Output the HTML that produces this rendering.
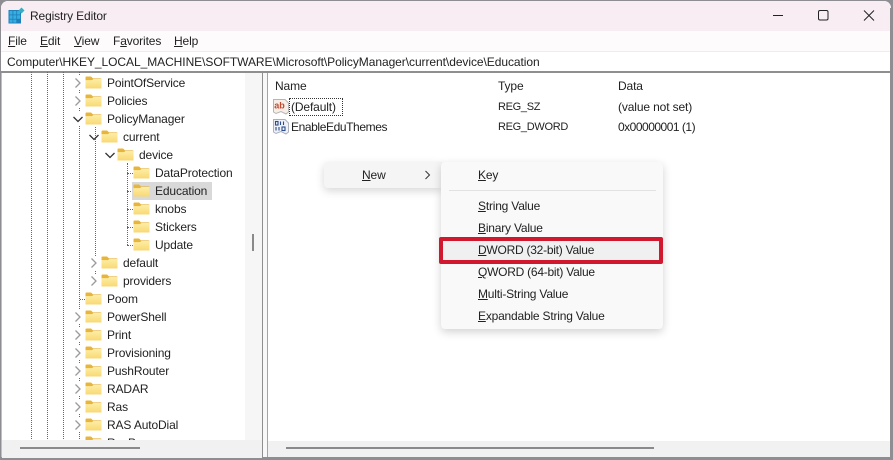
<!DOCTYPE html>
<html><head><meta charset="utf-8">
<style>
html,body{margin:0;padding:0;width:893px;height:460px;overflow:hidden;background:#8d8d92}
*{box-sizing:border-box}
body{font-family:"Liberation Sans",sans-serif;font-size:12px;color:#222;position:relative}
.a{position:absolute}
.t{position:absolute;white-space:nowrap;line-height:16px;height:16px;color:#222;letter-spacing:-.13px}
.t u{text-underline-offset:1px}
.c{position:absolute;width:8px;height:12px}
.f{position:absolute;width:17px;height:13px}
.dv{position:absolute;width:0;border-left:1px dotted #666}
.dh{position:absolute;height:0;border-top:1px dotted #666}
.n{font-size:11px;letter-spacing:-.3px}
</style></head><body>
<svg width="0" height="0" style="position:absolute">
<defs>
<linearGradient id="g" x1="0" y1="0" x2="0" y2="1"><stop offset="0" stop-color="#fdeea6"/><stop offset="1" stop-color="#f9d873"/></linearGradient>
<symbol id="fo" viewBox="0 0 17 14" preserveAspectRatio="none"><path d="M0.500 1.500Q0.500 0.500 1.500 0.500H6L8 2.500H15.500Q16.500 2.500 16.500 3.500V12.500Q16.500 13.500 15.500 13.500H1.500Q0.500 13.500 0.500 12.500Z" fill="#e8b53c"/><path d="M0.500 4.500L7 4.500L8.500 3.200H15.500Q16.500 3.200 16.500 4V12.500Q16.500 13.500 15.500 13.500H1.500Q0.500 13.500 0.500 12.500Z" fill="url(#g)"/></symbol>
<symbol id="cr" viewBox="0 0 8 12"><path d="M1.500 1.500L6 6L1.500 10.500" fill="none" stroke="#9a9a9a" stroke-width="1.300"/></symbol>
<symbol id="cd" viewBox="0 0 12 8"><path d="M1.500 2L6 6.500L10.500 2" fill="none" stroke="#333" stroke-width="1.300"/></symbol>
</defs></svg>

<!-- window -->
<div class="a" style="left:1px;top:1px;width:890px;height:458px;background:#fff;border-radius:7px 7px 0 0;overflow:hidden">
  <div class="a" style="left:0;top:0;width:890px;height:30px;background:#f7edf2"></div>
  <div class="a" style="left:0;top:30px;width:890px;height:21px;background:#fdfbfc"></div>
  <div class="a" style="left:0;top:50px;width:890px;height:1px;background:#eeeeee"></div>
  <div class="a" style="left:0;top:51px;width:890px;height:19px;background:#fff"></div>
  <div class="a" style="left:0;top:70px;width:890px;height:2px;background:#8f8f8f"></div>
  <div class="a" style="left:244px;top:72px;width:17px;height:367px;background:#f6f6f6"></div>
  <div class="a" style="left:261px;top:72px;width:1px;height:386px;background:#8f8f8f"></div>
  <div class="a" style="left:262px;top:72px;width:4px;height:386px;background:#f8f8f8"></div>
  <div class="a" style="left:266px;top:72px;width:1px;height:386px;background:#a5a5a5"></div>
  <div class="a" style="left:0;top:72px;width:1px;height:386px;background:#c0c0c0"></div>
  <div class="a" style="left:267px;top:440px;width:623px;height:18px;background:#f1f1f1"></div>
  <div class="a" style="left:889px;top:72px;width:1px;height:386px;background:#e0e0e0"></div>
</div>
<div class="a" style="left:0;top:457px;width:893px;height:3px;background:#8d8d92"></div>
<div class="a" style="left:890px;top:8px;width:3px;height:452px;background:#8d8d92"></div>
<div class="a" style="left:0;top:8px;width:1px;height:452px;background:#8d8d92"></div>

<!-- app icon -->
<svg class="a" style="left:8px;top:7px" width="17" height="17" viewBox="0 0 17 17">
<rect x="0.500" y="3" width="12.500" height="13.500" fill="#1f7fb8"/>
<g fill="#35aee2"><rect x="1.500" y="4" width="3" height="3.500"/><rect x="5.300" y="4" width="3" height="3.500"/><rect x="9.100" y="4" width="3" height="3.500"/><rect x="1.500" y="8.300" width="3" height="3.500"/><rect x="5.300" y="8.300" width="3" height="3.500"/><rect x="9.100" y="8.300" width="3" height="3.500"/><rect x="1.500" y="12.600" width="3" height="3"/><rect x="5.300" y="12.600" width="3" height="3"/></g>
<path d="M13.500 0.500L16.500 3.500L13.500 6.500L10.500 3.500Z" fill="#30b0c8"/></svg>
<span class="t" style="left:30px;top:8px">Registry Editor</span>

<!-- window buttons -->
<svg class="a" style="left:770px;top:8px" width="110" height="16" viewBox="0 0 110 16" fill="none" stroke="#222" stroke-width="1">
<path d="M3 7.500H13"/><rect x="48.500" y="2.500" width="9.500" height="9.500" rx="1.500"/><path d="M94 2.500L104 12.500M104 2.500L94 12.500"/></svg>

<!-- menu -->
<span class="t" style="left:8px;top:33px"><u>F</u>ile</span>
<span class="t" style="left:40px;top:33px"><u>E</u>dit</span>
<span class="t" style="left:74px;top:33px"><u>V</u>iew</span>
<span class="t" style="left:113px;top:33px">F<u>a</u>vorites</span>
<span class="t" style="left:174px;top:33px"><u>H</u>elp</span>
<span class="t" style="left:7px;top:54px;letter-spacing:-.06px">Computer\HKEY_LOCAL_MACHINE\SOFTWARE\Microsoft\PolicyManager\current\device\Education</span>

<!-- tree lines -->
<div class="dv" style="left:31px;top:72px;height:367px"></div>
<div class="dv" style="left:47px;top:72px;height:367px"></div>
<div class="dv" style="left:63px;top:72px;height:367px"></div>
<div class="dv" style="left:79px;top:72px;height:367px"></div>
<div class="dv" style="left:95px;top:127px;height:155px"></div>
<div class="dv" style="left:127px;top:163px;height:82px"></div>
<div class="dh" style="left:127px;top:173px;width:6px"></div>
<div class="dh" style="left:127px;top:191px;width:6px"></div>
<div class="dh" style="left:127px;top:209px;width:6px"></div>
<div class="dh" style="left:127px;top:227px;width:6px"></div>
<div class="dh" style="left:127px;top:245px;width:6px"></div>
<div class="dh" style="left:80px;top:299px;width:5px"></div>

<!-- tree rows: cover lines behind chevrons -->
<div class="a" style="left:73px;top:76px;width:11px;height:14px;background:#fff"></div>
<div class="a" style="left:73px;top:94px;width:11px;height:14px;background:#fff"></div>
<div class="a" style="left:73px;top:112px;width:11px;height:14px;background:#fff"></div>
<div class="a" style="left:73px;top:310px;width:11px;height:14px;background:#fff"></div>
<div class="a" style="left:73px;top:328px;width:11px;height:14px;background:#fff"></div>
<div class="a" style="left:73px;top:346px;width:11px;height:14px;background:#fff"></div>
<div class="a" style="left:73px;top:364px;width:11px;height:14px;background:#fff"></div>
<div class="a" style="left:73px;top:382px;width:11px;height:14px;background:#fff"></div>
<div class="a" style="left:73px;top:400px;width:11px;height:14px;background:#fff"></div>
<div class="a" style="left:73px;top:418px;width:11px;height:14px;background:#fff"></div>
<div class="a" style="left:89px;top:256px;width:11px;height:14px;background:#fff"></div>
<div class="a" style="left:89px;top:274px;width:11px;height:14px;background:#fff"></div>

<!-- selection -->
<div class="a" style="left:132px;top:182px;width:80px;height:18px;background:#d9d9d9"></div>

<!-- chevrons -->
<svg class="c" style="left:74px;top:77px"><use href="#cr"/></svg>
<svg class="c" style="left:74px;top:95px"><use href="#cr"/></svg>
<svg class="a" style="left:72px;top:115px" width="12" height="8"><use href="#cd"/></svg>
<svg class="a" style="left:88px;top:133px" width="12" height="8"><use href="#cd"/></svg>
<svg class="a" style="left:104px;top:151px" width="12" height="8"><use href="#cd"/></svg>
<svg class="c" style="left:90px;top:257px"><use href="#cr"/></svg>
<svg class="c" style="left:90px;top:275px"><use href="#cr"/></svg>
<svg class="c" style="left:74px;top:311px"><use href="#cr"/></svg>
<svg class="c" style="left:74px;top:329px"><use href="#cr"/></svg>
<svg class="c" style="left:74px;top:347px"><use href="#cr"/></svg>
<svg class="c" style="left:74px;top:365px"><use href="#cr"/></svg>
<svg class="c" style="left:74px;top:383px"><use href="#cr"/></svg>
<svg class="c" style="left:74px;top:401px"><use href="#cr"/></svg>
<svg class="c" style="left:74px;top:419px"><use href="#cr"/></svg>

<!-- folders -->
<svg class="f" style="left:85px;top:76px"><use href="#fo"/></svg>
<svg class="f" style="left:85px;top:94px"><use href="#fo"/></svg>
<svg class="f" style="left:85px;top:112px"><use href="#fo"/></svg>
<svg class="f" style="left:101px;top:130px"><use href="#fo"/></svg>
<svg class="f" style="left:117px;top:148px"><use href="#fo"/></svg>
<svg class="f" style="left:133px;top:166px"><use href="#fo"/></svg>
<svg class="f" style="left:133px;top:184px"><use href="#fo"/></svg>
<svg class="f" style="left:133px;top:202px"><use href="#fo"/></svg>
<svg class="f" style="left:133px;top:220px"><use href="#fo"/></svg>
<svg class="f" style="left:133px;top:238px"><use href="#fo"/></svg>
<svg class="f" style="left:101px;top:256px"><use href="#fo"/></svg>
<svg class="f" style="left:101px;top:274px"><use href="#fo"/></svg>
<svg class="f" style="left:85px;top:292px"><use href="#fo"/></svg>
<svg class="f" style="left:85px;top:310px"><use href="#fo"/></svg>
<svg class="f" style="left:85px;top:328px"><use href="#fo"/></svg>
<svg class="f" style="left:85px;top:346px"><use href="#fo"/></svg>
<svg class="f" style="left:85px;top:364px"><use href="#fo"/></svg>
<svg class="f" style="left:85px;top:382px"><use href="#fo"/></svg>
<svg class="f" style="left:85px;top:400px"><use href="#fo"/></svg>
<svg class="f" style="left:85px;top:418px"><use href="#fo"/></svg>
<svg class="f" style="left:85px;top:436px"><use href="#fo"/></svg>

<!-- tree text -->
<span class="t" style="left:107px;top:75px">PointOfService</span>
<span class="t" style="left:107px;top:93px">Policies</span>
<span class="t" style="left:107px;top:111px">PolicyManager</span>
<span class="t" style="left:123px;top:129px">current</span>
<span class="t" style="left:139px;top:147px">device</span>
<span class="t" style="left:155px;top:165px">DataProtection</span>
<span class="t" style="left:155px;top:183px">Education</span>
<span class="t" style="left:155px;top:201px">knobs</span>
<span class="t" style="left:155px;top:219px">Stickers</span>
<span class="t" style="left:155px;top:237px">Update</span>
<span class="t" style="left:123px;top:255px">default</span>
<span class="t" style="left:123px;top:273px">providers</span>
<span class="t" style="left:107px;top:291px">Poom</span>
<span class="t" style="left:107px;top:309px">PowerShell</span>
<span class="t" style="left:107px;top:327px">Print</span>
<span class="t" style="left:107px;top:345px">Provisioning</span>
<span class="t" style="left:107px;top:363px">PushRouter</span>
<span class="t" style="left:107px;top:381px">RADAR</span>
<span class="t" style="left:107px;top:399px">Ras</span>
<span class="t" style="left:107px;top:417px">RAS AutoDial</span>
<span class="t" style="left:107px;top:435px">RasPers</span>
<div class="a" style="left:2px;top:440px;width:260px;height:18px;background:#f1f1f1"></div>

<!-- scrollbars -->
<div class="a" style="left:252px;top:234px;width:2px;height:17px;background:#8a8a8a"></div>
<div class="a" style="left:20px;top:447px;width:120px;height:2px;background:#8a8a8a"></div>
<div class="a" style="left:286px;top:447px;width:368px;height:2px;background:#8a8a8a"></div>

<!-- list header + rows -->
<span class="t" style="left:275px;top:78px">Name</span>
<span class="t" style="left:498px;top:78px">Type</span>
<span class="t" style="left:618px;top:78px">Data</span>

<svg class="a" style="left:273px;top:99px" width="16" height="16" viewBox="0 0 16 16">
<path d="M0.500 0.500H12L15.500 4V13L13 15L8 12.500L3 14.500L0.500 13Z" fill="#f6efe8" stroke="#b9b4b4"/>
<text x="1.200" y="9.500" font-family="Liberation Sans" font-size="9" font-weight="bold" fill="#c2492f">ab</text></svg>
<svg class="a" style="left:273px;top:119px" width="16" height="16" viewBox="0 0 16 16">
<path d="M0.500 0.500H12L15.500 4V13L13 15L8 12.500L3 14.500L0.500 13Z" fill="#eef1f8" stroke="#aab0c0"/>
<g fill="none" stroke="#2a4b8c" stroke-width="1.100"><rect x="2.500" y="2.500" width="2.500" height="3.500"/><path d="M7.500 2.500V6"/><path d="M10.500 2.500V6"/><path d="M3 8V11.500"/><path d="M6 8V11.500"/><rect x="9" y="8" width="3" height="3.500"/></g></svg>

<div class="a" style="left:289px;top:98px;width:54px;height:18px;border:1px dotted #333"></div>
<span class="t" style="left:291px;top:99px">(Default)</span>
<span class="t n" style="left:498px;top:99px">REG_SZ</span>
<span class="t" style="left:618px;top:99px">(value not set)</span>
<span class="t" style="left:291px;top:119px;letter-spacing:-.4px">EnableEduThemes</span>
<span class="t n" style="left:498px;top:119px">REG_DWORD</span>
<span class="t" style="left:618px;top:119px;letter-spacing:-.5px">0x00000001 (1)</span>

<!-- context menu -->
<div class="a" style="left:324px;top:162px;width:118px;height:26px;background:#f5f5f5;border-radius:4px 0 0 4px;box-shadow:0 3px 9px rgba(0,0,0,.16)"></div>
<span class="t" style="left:362px;top:167px"><u>N</u>ew</span>
<svg class="a" style="left:424px;top:170px" width="7" height="10" viewBox="0 0 7 10"><path d="M1.500 1L5.500 5L1.500 9" fill="none" stroke="#333" stroke-width="1"/></svg>

<div class="a" style="left:441px;top:162px;width:222px;height:167px;background:#f9f9f9;border-radius:4px;box-shadow:0 3px 9px rgba(0,0,0,.18)"></div>
<div class="a" style="left:449px;top:190px;width:207px;height:1px;background:#e2e2e2"></div>
<div class="a" style="left:441px;top:239px;width:222px;height:23px;background:#f0f0f0"></div>
<span class="t" style="left:478px;top:167px"><u>K</u>ey</span>
<span class="t" style="left:478px;top:198px;letter-spacing:-.2px"><u>S</u>tring Value</span>
<span class="t" style="left:478px;top:220px;letter-spacing:-.2px"><u>B</u>inary Value</span>
<span class="t" style="left:478px;top:242px;letter-spacing:-.25px"><u>D</u>WORD (32-bit) Value</span>
<span class="t" style="left:478px;top:264px;letter-spacing:-.25px"><u>Q</u>WORD (64-bit) Value</span>
<span class="t" style="left:478px;top:286px;letter-spacing:-.2px"><u>M</u>ulti-String Value</span>
<span class="t" style="left:478px;top:308px;letter-spacing:-.2px"><u>E</u>xpandable String Value</span>
<div class="a" style="left:439px;top:237px;width:224px;height:27px;border:4px solid #d0182e;border-radius:2px"></div>
</body></html>
